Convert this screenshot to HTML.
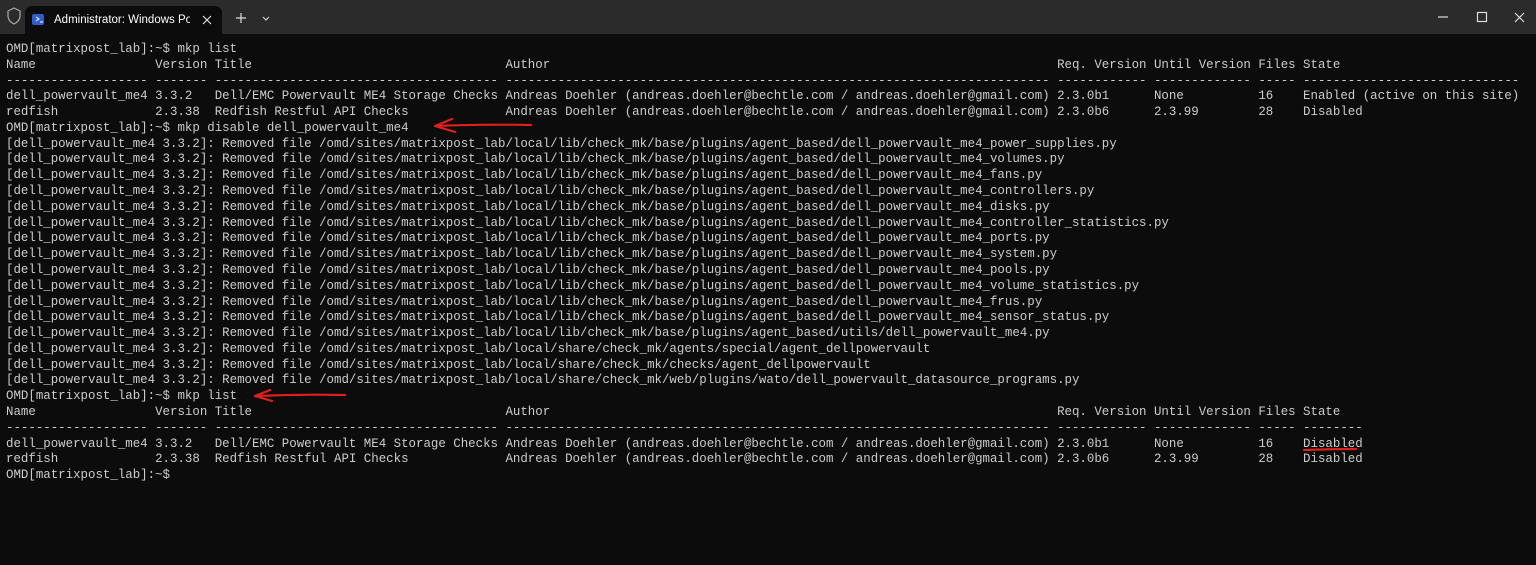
<!DOCTYPE html>
<html><head><meta charset="utf-8"><style>
html,body{margin:0;padding:0;background:#0c0c0c;width:1536px;height:565px;overflow:hidden;position:relative}
#bar{position:absolute;left:0;top:0;width:1536px;height:34px;background:#2b2b2b}
#tab{position:absolute;left:25px;top:6px;width:197px;height:28px;background:#0c0c0c;border-radius:7px 7px 0 0;font:11.5px "Liberation Sans",sans-serif;color:#fff}
pre{position:absolute;left:6px;top:42px;margin:0;font:12.43px/15.78px "Liberation Mono",monospace;color:#cccccc;white-space:pre}
svg{position:absolute;left:0;top:0}
</style></head><body>
<div id="bar"></div>
<div id="tab"><span style="position:absolute;left:29px;top:8px;width:136px;overflow:hidden;white-space:nowrap">Administrator: Windows Powe</span>
<div style="position:absolute;left:7px;top:8px;width:12px;height:11px;background:#2f5ecb;border-radius:2px"></div></div>
<svg width="1536" height="565">
<path d="M8 11 l6 -3 6 3 v5 q0 5 -6 8 q-6 -3 -6 -8z" fill="none" stroke="#aaa" stroke-width="1.2"/>
<path d="M36 17 l3 2 -3 2 M40 22 h3" stroke="#fff" stroke-width="1" fill="none"/>
<path d="M203 16 l8 8 M211 16 l-8 8" stroke="#ddd" stroke-width="1.2"/>
<path d="M236 18 h10 M241 13 v10" stroke="#ddd" stroke-width="1.2"/>
<path d="M263 17 l3 3 3 -3" stroke="#ccc" fill="none" stroke-width="1.2"/>
<path d="M1438 17 h10" stroke="#ddd" stroke-width="1.2"/>
<rect x="1477.5" y="12.5" width="9" height="9" fill="none" stroke="#ddd" stroke-width="1.2"/>
<path d="M1515 13 l9 9 M1524 13 l-9 9" stroke="#ddd" stroke-width="1.2"/>
<g stroke="#e0201c" stroke-width="2.2" fill="none" stroke-linecap="round">
<path d="M435 126 Q480 124 531 125 M435 126 L452 119 M435 126 L455 132"/>
<path d="M255 396 Q300 394 345 395 M255 396 L270 390 M255 396 L272 401"/>
<path d="M1304 450 Q1330 449 1356 449"/>
</g>
</svg>
<pre>OMD[matrixpost_lab]:~$ mkp list
Name                Version Title                                  Author                                                                    Req. Version Until Version Files State
------------------- ------- -------------------------------------- ------------------------------------------------------------------------- ------------ ------------- ----- -----------------------------
dell_powervault_me4 3.3.2   Dell/EMC Powervault ME4 Storage Checks Andreas Doehler (andreas.doehler@bechtle.com / andreas.doehler@gmail.com) 2.3.0b1      None          16    Enabled (active on this site)
redfish             2.3.38  Redfish Restful API Checks             Andreas Doehler (andreas.doehler@bechtle.com / andreas.doehler@gmail.com) 2.3.0b6      2.3.99        28    Disabled
OMD[matrixpost_lab]:~$ mkp disable dell_powervault_me4
[dell_powervault_me4 3.3.2]: Removed file /omd/sites/matrixpost_lab/local/lib/check_mk/base/plugins/agent_based/dell_powervault_me4_power_supplies.py
[dell_powervault_me4 3.3.2]: Removed file /omd/sites/matrixpost_lab/local/lib/check_mk/base/plugins/agent_based/dell_powervault_me4_volumes.py
[dell_powervault_me4 3.3.2]: Removed file /omd/sites/matrixpost_lab/local/lib/check_mk/base/plugins/agent_based/dell_powervault_me4_fans.py
[dell_powervault_me4 3.3.2]: Removed file /omd/sites/matrixpost_lab/local/lib/check_mk/base/plugins/agent_based/dell_powervault_me4_controllers.py
[dell_powervault_me4 3.3.2]: Removed file /omd/sites/matrixpost_lab/local/lib/check_mk/base/plugins/agent_based/dell_powervault_me4_disks.py
[dell_powervault_me4 3.3.2]: Removed file /omd/sites/matrixpost_lab/local/lib/check_mk/base/plugins/agent_based/dell_powervault_me4_controller_statistics.py
[dell_powervault_me4 3.3.2]: Removed file /omd/sites/matrixpost_lab/local/lib/check_mk/base/plugins/agent_based/dell_powervault_me4_ports.py
[dell_powervault_me4 3.3.2]: Removed file /omd/sites/matrixpost_lab/local/lib/check_mk/base/plugins/agent_based/dell_powervault_me4_system.py
[dell_powervault_me4 3.3.2]: Removed file /omd/sites/matrixpost_lab/local/lib/check_mk/base/plugins/agent_based/dell_powervault_me4_pools.py
[dell_powervault_me4 3.3.2]: Removed file /omd/sites/matrixpost_lab/local/lib/check_mk/base/plugins/agent_based/dell_powervault_me4_volume_statistics.py
[dell_powervault_me4 3.3.2]: Removed file /omd/sites/matrixpost_lab/local/lib/check_mk/base/plugins/agent_based/dell_powervault_me4_frus.py
[dell_powervault_me4 3.3.2]: Removed file /omd/sites/matrixpost_lab/local/lib/check_mk/base/plugins/agent_based/dell_powervault_me4_sensor_status.py
[dell_powervault_me4 3.3.2]: Removed file /omd/sites/matrixpost_lab/local/lib/check_mk/base/plugins/agent_based/utils/dell_powervault_me4.py
[dell_powervault_me4 3.3.2]: Removed file /omd/sites/matrixpost_lab/local/share/check_mk/agents/special/agent_dellpowervault
[dell_powervault_me4 3.3.2]: Removed file /omd/sites/matrixpost_lab/local/share/check_mk/checks/agent_dellpowervault
[dell_powervault_me4 3.3.2]: Removed file /omd/sites/matrixpost_lab/local/share/check_mk/web/plugins/wato/dell_powervault_datasource_programs.py
OMD[matrixpost_lab]:~$ mkp list
Name                Version Title                                  Author                                                                    Req. Version Until Version Files State
------------------- ------- -------------------------------------- ------------------------------------------------------------------------- ------------ ------------- ----- --------
dell_powervault_me4 3.3.2   Dell/EMC Powervault ME4 Storage Checks Andreas Doehler (andreas.doehler@bechtle.com / andreas.doehler@gmail.com) 2.3.0b1      None          16    Disabled
redfish             2.3.38  Redfish Restful API Checks             Andreas Doehler (andreas.doehler@bechtle.com / andreas.doehler@gmail.com) 2.3.0b6      2.3.99        28    Disabled
OMD[matrixpost_lab]:~$ </pre>
</body></html>
